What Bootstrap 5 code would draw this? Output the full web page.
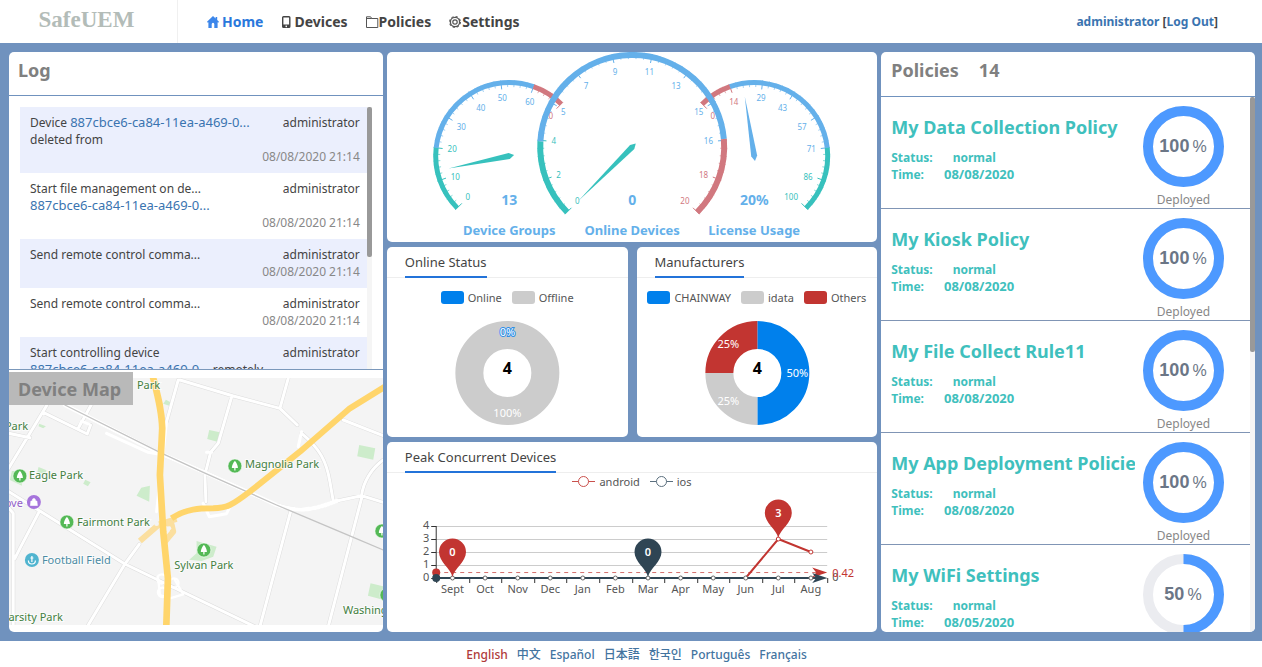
<!DOCTYPE html>
<html lang="en">
<head>
<meta charset="utf-8">
<meta name="viewport" content="width=device-width, initial-scale=1">
<title>SafeUEM</title>
<link href="https://cdn.jsdelivr.net/npm/bootstrap@5.3.0/dist/css/bootstrap.min.css" rel="stylesheet">
<style>
:root { --frame: #7092be; --teal: #37c1bd; --sky: #64b0ea; --rose: #d1787f; --ink: #444; --link: #3a74b0; }
body { font-family: "Noto Sans", "Noto Sans CJK SC", "Noto Sans CJK KR", sans-serif; font-size: 12px; line-height: 17px; color: var(--ink); }
a { text-decoration: none; color: var(--link); }
.topbar { min-height: 43px; }
.brand-box { width: 178px; min-height: 43px; border-right: 1px solid #f0f0f0; padding: 0 4px 4px 0; font: bold 23px "Liberation Serif", serif; color: #b3bcb8; }
.brand-box:hover { color: #b3bcb8; }
.topbar .nav { gap: 18px; padding-left: 29px; }
.topbar .nav-link { padding: 0; color: var(--ink); font-size: 14px; font-weight: 700; line-height: 20px; }
.topbar .nav-link.active { color: #2a78dc; gap: 3px; }
.account { padding-right: 44px; }
.board { background: var(--frame); padding: 9px 7px 9px 9px; display: grid; gap: 4px; grid-template-columns: minmax(0, 1fr); }
.panel { background: #fff; border-radius: 5px; overflow: hidden; }
.panel-head { height: 44px; border-bottom: 1px solid var(--frame); padding: 5px 9px; font-size: 18px; line-height: 27px; font-weight: 700; color: #808080; margin: 0; flex: none; }
.policy-head { height: 45px; padding: 5px 10px; }
.log-area { margin: 11px 11px 0; }
.scroll-area { overflow-y: auto; scrollbar-width: none; flex: 1 1 0; min-height: 260px; }
.scroll-area::-webkit-scrollbar { display: none; }
.track { position: absolute; top: 0; right: 0; bottom: 0; width: 5px; background: #f5f5f5; }
.track::before { content: ""; display: block; height: var(--thumb); background: #999; border-radius: 2px; }
#log { margin-right: 5px; }
.log-item { padding: 7px 7px 8px 10px; }
.log-item:nth-child(odd) { background: #ebeffd; }
.log-item a { font-size: 13px; }
.log-item time { color: #888; }
.log-text { max-width: 250px; }
.map-box { border-top: 1px solid #7b98bb; height: 263px; padding: 8px 0 7px; flex: none; }
.map-box svg { width: 100%; height: 100%; display: block; }
.map-title { position: absolute; left: 0; top: 2px; background: #b9b9b9; color: #808080; font-size: 18px; line-height: 28px; font-weight: 700; padding: 3px 12px 2px 9px; margin: 0; }
.chart-head { height: 31px; border-bottom: 1px solid #eee; padding: 0 18px; margin: 0; flex: none; }
.chart-head span { height: 31px; line-height: 31px; font-size: 13px; font-weight: 400; border-bottom: 2px solid #2373d9; }
.chart-svg { width: 100%; display: block; flex: none; }
.legend-row { font-size: 11px; line-height: 17px; gap: 10px; }
.legend-row li { display: flex; align-items: center; gap: 4px; color: #555; }
.pie-legend { height: 38px; }
.swatch { width: 23px; height: 13px; border-radius: 3px; }
.tick-label { font-size: 8px; }
.gauge-value { font-size: 14px; font-weight: 700; fill: var(--sky); text-anchor: middle; }
.gauge-title { font-size: 13px; font-weight: 700; fill: var(--sky); text-anchor: middle; }
.pie-label { font-size: 11px; fill: #fff; text-anchor: middle; }
.pie-label-empty { stroke: #2f8fe8; stroke-width: 2px; paint-order: stroke; }
.pie-total { font-size: 16px; font-weight: 700; fill: #000; text-anchor: middle; }
.axis-label { font-size: 11px; fill: #555; }
.policy-item { height: 112px; border-bottom: 1px solid #8095b5; padding: 0 31px 0 10px; }
.policy-name { font-size: 18px; line-height: 27px; font-weight: 700; margin: 17px 0 8px; white-space: nowrap; overflow: hidden; }
.policy-item dl { font-weight: 700; margin: 0; }
.policy-item dl, .policy-name { color: #3fc0bd; }
.policy-item dd { margin: 0; }
.policy-item dd time { font-size: 13px; }
.ring-box { width: 81px; flex: none; padding-top: 9px; color: #888; text-align: center; }
.ring-box svg { display: block; margin-bottom: 4px; }
.ring-box text { font: bold 18px "Liberation Sans", sans-serif; fill: #6b7686; text-anchor: middle; }
.ring-box .pct-sign { font-size: 16px; }
.lang-bar { min-height: 26px; gap: 9px; font-weight: 500; padding-left: 11px; }
.lang-bar a { color: #43749f; }
.lang-bar a.active { color: #b03a3a; }
.map-label { font-size: 11px; fill: #43803f; stroke: #fff; stroke-width: 2px; stroke-opacity: .7; paint-order: stroke; }
@media (min-width: 992px) {
  .board { grid-template-columns: 30% minmax(0, 1fr) 30%; }
}
</style>
</head>
<body class="min-vh-100 d-flex flex-column bg-white">

<header class="topbar d-flex flex-wrap align-items-center">
  <a class="brand-box d-flex align-items-center justify-content-center" href="#">SafeUEM</a>
  <ul class="nav flex-grow-1">
    <li class="nav-item"><a class="nav-link active d-flex align-items-center" href="#"><svg width="12" height="12" viewBox="0 0 12 12" fill="#3c86ea"><path d="M6 0 L8.6 2.4 V1 H10.2 V3.9 L12 5.8 L11.2 6.8 L10.6 6.3 V12 H7.3 V8.2 A1.3 1.5 0 0 0 4.7 8.2 V12 H1.4 V6.3 L.8 6.8 L0 5.8 Z"/></svg>Home</a></li>
    <li class="nav-item"><a class="nav-link d-flex align-items-center" href="#"><svg width="13" height="12" viewBox="0 0 13 12"><path fill="#444" fill-rule="evenodd" d="M2.5 0 H8 Q9.5 0 9.5 1.5 V10.5 Q9.5 12 8 12 H2.5 Q1 12 1 10.5 V1.5 Q1 0 2.5 0 Z M2.4 1.4 V8.6 H8.1 V1.4 Z M5.25 9.5 A.8 .8 0 1 0 5.26 9.5 Z"/></svg>Devices</a></li>
    <li class="nav-item"><a class="nav-link d-flex align-items-center" href="#"><svg width="13" height="12" viewBox="0 0 13 12"><path fill="none" stroke="#555" d="M.5 11.5 V.8 H4.6 L5.8 2.5 H11.8 V11.5 Z M5.8 2.5 H.5"/></svg>Policies</a></li>
    <li class="nav-item"><a class="nav-link d-flex align-items-center" href="#"><svg width="13" height="12" viewBox="0 0 13 12" fill="none" stroke="#555"><circle cx="6" cy="6" r="4.6" stroke-width="1.3"/><circle cx="6" cy="6" r="5.4" stroke-width="1.1" stroke-dasharray="2.2 2.04"/><circle cx="6" cy="6" r="2.2" stroke-width="1.2"/></svg>Settings</a></li>
  </ul>
  <div class="account fw-bold"><a href="#">administrator</a> [<a href="#">Log Out</a>]</div>
</header>

<main class="board flex-fill">
  <section class="panel d-flex flex-column">
    <h2 class="panel-head">Log</h2>
    <div class="log-area d-flex flex-column flex-fill position-relative">
      <div class="scroll-area">
        <div id="log"></div>
      </div>
      <div class="track" style="--thumb:150px"></div>
    </div>
    <div class="map-box position-relative">
      <svg viewBox="0 0 374 247" preserveAspectRatio="xMidYMid slice" role="img" aria-label="Map of device positions">
        <rect width="374" height="247" fill="#f4f4f4"/>
        <g transform="translate(-9 -13) scale(.33333)" fill="none" stroke-linecap="round" stroke-linejoin="round">
          <g fill="#cdeccb">
            <path d="M628 195 L660 202 652 230 622 222Z M1078 240 L1126 250 1120 284 1072 274Z M424 368 L450 362 448 410 410 392Z M590 528 L650 545 640 575 605 588 568 584 590 565Z M1112 655 L1152 664 V705 L1104 692Z M498 104 L512 112 508 122 490 116Z M118 176 L138 184 130 190 116 184Z M256 344 L272 352 264 364 250 356Z M116 306 L140 316 136 328 112 322Z M36 318 L66 318 66 362 30 345Z"/>
          </g>
          <g stroke="#ddd" stroke-width="12">
            <path d="M140 122 L20 320 M130 142 L262 207 272 180 M235 190 L275 118 M27 205 L90 218 M27 380 L375 597 765 785 M418 538 L375 597 262 785 M118 440 L60 550 45 580 M27 430 L40 445 V785 M535 45 L500 170 M540 45 L700 93 840 130 892 180 M865 40 L840 130 M696 93 L655 235 632 262 615 330 618 410 M872 440 L780 785 M1085 400 L985 785 M905 205 C960 250 980 290 990 350 L1000 408 M1000 410 L1085 392 1150 412 M1085 392 C1090 350 1115 310 1150 285 M1030 165 L1150 212"/>
            <path d="M195 120 L480 265 610 320 830 420 C890 440 930 440 1010 408"/>
          </g>
          <g stroke="#fff" stroke-width="9">
            <path d="M140 122 L20 320 M130 142 L262 207 272 180 245 168 235 190 M235 190 L275 118 M27 205 L90 218 M27 380 L375 597 765 785 M418 538 L375 597 262 785 M118 440 L60 550 45 580 M27 430 L40 445 V785 M535 45 L500 170 470 440 M540 45 L700 93 840 130 892 180 M865 40 L840 130 M696 93 L655 235 632 262 615 330 618 410 M620 262 L635 262 M872 440 L780 785 M1085 400 L985 785 M905 205 C960 250 980 290 990 350 L1000 408 M1000 410 L1085 392 1150 412 M1085 392 C1090 350 1115 310 1150 285 M1030 165 L1150 212 M905 200 L895 245"/>
            <path d="M195 120 L480 265 610 320 830 420 C890 440 930 440 1010 408" stroke-width="13"/>
            <path d="M320 205 L445 262 480 268 M610 415 L628 455 680 446 690 425"/>
          </g>
          <path d="M195 120 L480 262 610 322 830 420 1055 515 1150 555" stroke="#c4c4c4" stroke-width="4"/>
          <g stroke="#fff" stroke-width="7"><circle cx="486" cy="642" r="14"/><circle cx="522" cy="654" r="14"/><circle cx="488" cy="682" r="14"/><path d="M475 640 L480 690 510 700 550 688 525 645"/></g>
          <path d="M420 528 L478 478 530 462 M480 470 L515 478 520 500 495 530" stroke="#fbdf9f" stroke-width="18" stroke-linecap="butt"/>
          <g fill="#f4f4f4"><circle cx="470" cy="476" r="7"/><circle cx="508" cy="490" r="6"/></g>
          <g stroke="#ffd56b" stroke-linecap="butt">
            <path d="M455 20 C470 80 486 130 487 190 L480 330 490 500 504 640 499 790" stroke-width="20"/>
            <path d="M515 460 C560 430 600 430 640 430 C690 428 700 415 750 380 L900 260 1050 130 1160 62" stroke-width="18"/>
          </g>
        </g>
        <g class="map-label">
          <text x="128" y="11">Park</text><text x="-4" y="52">Park</text><text x="20" y="101">Eagle Park</text>
          <text x="14" y="129" text-anchor="end" fill="#9361c9">Grove</text><text x="68" y="148">Fairmont Park</text>
          <text x="33" y="186" fill="#4b8ba3">Football Field</text><text x="195" y="191" text-anchor="middle">Sylvan Park</text>
          <text x="236" y="90">Magnolia Park</text><text x="54" y="243" text-anchor="end">Varsity Park</text><text x="334" y="236">Washington</text>
        </g>
        <g id="parks"></g>
        <circle cx="25" cy="124" r="7" fill="#a674dc"/><path d="M22 123 H28 L28.500 127.500 H21.500 Z M23.500 123 V122 A1.500 1.500 0 0 1 26.500 122 V123" fill="#fff" stroke="#fff" stroke-width=".6"/>
        <circle cx="23" cy="182" r="7" fill="#50b4cf"/><path d="M19.500 182.500 A3.500 3.500 0 0 0 26.500 182.500 M23 178 V184 M21.500 180 H24.500" fill="none" stroke="#fff" stroke-width="1.200"/>
      </svg>
      <h2 class="map-title">Device Map</h2>
    </div>
  </section>

  <div class="d-flex flex-column" style="gap:5px">
    <section class="panel flex-fill d-flex align-items-center">
      <svg id="gauges" class="chart-svg" height="190" viewBox="0 0 490 190"></svg>
    </section>
    <div class="row g-0 flex-fill" style="column-gap:9px">
      <section class="panel col d-flex flex-column">
        <h3 class="chart-head d-flex"><span>Online Status</span></h3>
        <ul class="legend-row pie-legend list-unstyled d-flex justify-content-center align-items-center mb-0">
          <li><i class="swatch" style="background:#0080ec"></i>Online</li>
          <li><i class="swatch" style="background:#ccc"></i>Offline</li>
        </ul>
        <svg class="chart-svg" height="121" viewBox="0 0 240 121">
          <circle cx="120" cy="57" r="38" fill="none" stroke="#ccc" stroke-width="28"/>
          <text class="pie-label pie-label-empty" x="120" y="20">0%</text>
          <text class="pie-label" x="120" y="101">100%</text>
          <text class="pie-total" x="120" y="58">4</text>
        </svg>
      </section>
      <section class="panel col d-flex flex-column">
        <h3 class="chart-head d-flex"><span>Manufacturers</span></h3>
        <ul class="legend-row pie-legend list-unstyled d-flex justify-content-center align-items-center mb-0">
          <li><i class="swatch" style="background:#0080ec"></i>CHAINWAY</li>
          <li><i class="swatch" style="background:#ccc"></i>idata</li>
          <li><i class="swatch" style="background:#c23531"></i>Others</li>
        </ul>
        <svg class="chart-svg" height="121" viewBox="0 0 240 121">
          <g fill="none" stroke-width="28">
            <path d="M120 19 A38 38 0 0 1 120 95" stroke="#0080ec"/>
            <path d="M120 95 A38 38 0 0 1 82 57" stroke="#ccc"/>
            <path d="M82 57 A38 38 0 0 1 120 19" stroke="#c23531"/>
          </g>
          <text class="pie-label" x="160" y="61">50%</text>
          <text class="pie-label" x="91" y="32">25%</text>
          <text class="pie-label" x="91" y="89">25%</text>
          <text class="pie-total" x="120" y="58">4</text>
        </svg>
      </section>
    </div>
    <section class="panel flex-fill d-flex flex-column">
      <h3 class="chart-head d-flex"><span>Peak Concurrent Devices</span></h3>
      <ul class="legend-row list-unstyled d-flex justify-content-center mb-0">
        <li><svg width="23" height="13" fill="#fff" stroke="#c9504c"><path d="M0 6.500 H23"/><circle cx="11.500" cy="6.500" r="5"/></svg>android</li>
        <li><svg width="23" height="13" fill="#fff" stroke="#5b6f7e"><path d="M0 6.500 H23"/><circle cx="11.500" cy="6.500" r="5"/></svg>ios</li>
      </ul>
      <svg id="peak" class="chart-svg" height="142" viewBox="0 0 490 142"></svg>
    </section>
  </div>

  <section class="panel d-flex flex-column">
    <h2 class="panel-head policy-head">Policies<span class="ms-3 ps-1">14</span></h2>
    <div class="d-flex flex-column flex-fill position-relative">
      <div class="scroll-area" id="policies"></div>
      <div class="track" style="--thumb:255px"></div>
    </div>
  </section>
</main>

<footer class="lang-bar d-flex flex-wrap align-items-center justify-content-center">
  <a class="active" href="#">English</a><a href="#" lang="zh">中文</a><a href="#">Español</a><a href="#" lang="ja">日本語</a><a href="#" lang="ko">한국인</a><a href="#">Português</a><a href="#">Français</a>
</footer>

<script src="https://cdn.jsdelivr.net/npm/bootstrap@5.3.0/dist/js/bootstrap.bundle.min.js"></script>
<script>
const TEAL = '#37c1bd', SKY = '#64b0ea', ROSE = '#d1787f', RED = '#c23531', NAVY = '#2f4554';
const byId = id => document.getElementById(id);

// Log entries
const device = '<a href="#">887cbce6-ca84-11ea-a469-0...</a>';
byId('log').innerHTML = [
  'Device ' + device + '<br>deleted from',
  'Start file management on de...<br>' + device,
  'Send remote control comma...',
  'Send remote control comma...',
  'Start controlling device<br>' + device + ' remotely'
].map(text => `<article class="log-item"><div class="d-flex justify-content-between"><div class="log-text">${text}</div><div>administrator</div></div><time class="d-block text-end">08/08/2020 21:14</time></article>`).join('');

// Policies
byId('policies').innerHTML = [
  ['My Data Collection Policy', '08/08/2020', 100],
  ['My Kiosk Policy', '08/08/2020', 100],
  ['My File Collect Rule11', '08/08/2020', 100],
  ['My App Deployment Policies', '08/08/2020', 100],
  ['My WiFi Settings', '08/05/2020', 50]
].map(([name, date, pct]) => `<article class="policy-item d-flex justify-content-between gap-2">
  <div class="flex-fill overflow-hidden"><h3 class="policy-name">${name}</h3>
  <dl><div class="d-flex"><dt class="me-3 pe-1">Status:</dt><dd>normal</dd></div><div class="d-flex"><dt class="me-3 pe-1">Time:</dt><dd><time>${date}</time></dd></div></dl></div>
  <div class="ring-box"><svg width="81" height="81" viewBox="0 0 81 81"><circle cx="40.5" cy="40.5" r="35.5" fill="none" stroke="#ebecf0" stroke-width="10"/><circle cx="40.5" cy="40.5" r="35.5" fill="none" stroke="#4d99ff" stroke-width="10" pathLength="100" stroke-dasharray="${pct} ${100 - pct}" transform="rotate(-90 40.5 40.5)"/><text x="40" y="46">${pct}<tspan class="pct-sign fw-normal" dx="3">%</tspan></text></svg>Deployed</div>
</article>`).join('');

// Park markers on the map
byId('parks').innerHTML = [[11, 98], [58, 144], [195, 172], [226, 88], [373, 153], [378, 217]].map(([x, y]) =>
  `<g transform="translate(${x} ${y})"><circle r="7" fill="#54b956" stroke="#fff" stroke-opacity=".6"/><path d="M0 -5 C1.5 -4 3.2 0 3 2 H.6 V4.4 H-.6 V2 H-3 C-3.2 0 -1.500 -4 0 -5Z" fill="#fff"/></g>`).join('');

// Gauges
function gauge({ cx, cy, r, ring, from, to, labels, stops, frac, pointer, needle, value, title }) {
  const at = (deg, rad) => [cx + rad * Math.cos(deg * Math.PI / 180), cy - rad * Math.sin(deg * Math.PI / 180)];
  const p = xy => xy.map(n => n.toFixed(2)).join(' ');
  const ang = t => from + (to - from) * t;
  const colorAt = t => stops.find(s => t <= s[0] + .005)[1];
  const n = labels.length - 1;
  let out = '', start = 0;
  for (let i = 0; i <= n * 5; i++) {
    const t = i / (n * 5), a = ang(t), major = i % 5 === 0, c = colorAt(t);
    out += `<path d="M${p(at(a, r))} L${p(at(a, r - (major ? 9 : 7)))}" stroke="${c}" stroke-width="1" stroke-opacity="${major ? 1 : .6}"/>`;
    if (major) {
      const [x, y] = at(a, r - 14), cs = Math.cos(a * Math.PI / 180), sn = Math.sin(a * Math.PI / 180);
      const anchor = cs < -.4 ? 'start' : cs > .4 ? 'end' : 'middle';
      const dy = sn > .4 ? 7 : sn < -.4 ? 0 : 3;
      out += `<text class="tick-label" x="${x.toFixed(1)}" y="${(y + dy).toFixed(1)}" text-anchor="${anchor}" fill="${c}">${labels[i / 5]}</text>`;
    }
  }
  for (const [end, color] of stops) {
    const rad = r - ring / 2;
    out += `<path d="M${p(at(ang(start), rad))} A${rad} ${rad} 0 0 1 ${p(at(ang(end), rad))}" fill="none" stroke="${color}" stroke-width="${ring}"/>`;
    start = end;
  }
  const a = ang(frac);
  out += `<path d="M${p(at(a + 180, 5))} L${p(at(a + 90, needle))} L${p(at(a, pointer))} L${p(at(a - 90, needle))}Z" fill="${colorAt(frac)}"/>`;
  return out + `<text class="gauge-value" x="${cx}" y="153">${value}</text><text class="gauge-title" x="${cx}" y="183">${title}</text>`;
}
byId('gauges').innerHTML =
  gauge({ cx: 122, cy: 104, r: 76, ring: 5, from: 225, to: 45, labels: [0, 10, 20, 30, 40, 50, 60, 70], stops: [[2 / 7, TEAL], [6 / 7, SKY], [1, ROSE]], frac: 13 / 70, pointer: 62, needle: 3, value: '13', title: 'Device Groups' }) +
  gauge({ cx: 367, cy: 104, r: 76, ring: 5, from: 135, to: -45, labels: [0, 14, 29, 43, 57, 71, 86, 100], stops: [[1 / 7, ROSE], [5 / 7, SKY], [1, TEAL]], frac: .2, pointer: 60, needle: 3, value: '20%', title: 'License Usage' }) +
  gauge({ cx: 245, cy: 95, r: 95, ring: 6, from: 225, to: -45, labels: [0, 2, 4, 5, 7, 9, 11, 13, 15, 16, 18, 20], stops: [[.18, TEAL], [.815, SKY], [1, ROSE]], frac: 0, pointer: 76, needle: 3, value: '0', title: 'Online Devices' });

// Peak concurrent devices
(function () {
  const months = ['Sept', 'Oct', 'Nov', 'Dec', 'Jan', 'Feb', 'Mar', 'Apr', 'May', 'Jun', 'Jul', 'Aug'];
  const android = [0, 0, 0, 0, 0, 0, 0, 0, 0, 0, 3, 2];
  const x0 = 49, x1 = 440, base = 88, unit = 13, step = (x1 - x0) / 12;
  const X = i => +(x0 + step * (i + .5)).toFixed(1), Y = v => base - unit * v;
  const arrow = (y, c) => `<path d="M${x1} ${y} L${x1 - 15} ${y - 5} L${x1 - 11} ${y} L${x1 - 15} ${y + 5}Z" fill="${c}"/>`;
  const pin = (i, v, c) => `<g transform="translate(${X(i)} ${Y(v) - 26})"><path d="M0 25 C-2 16 -13.500 10 -13.500 0 A13.500 13.500 0 0 1 13.500 0 C13.500 10 2 16 0 25Z" fill="${c}"/><text y="4" fill="#fff" font-size="11" font-weight="600" text-anchor="middle">${v}</text></g>`;
  let s = '';
  for (let v = 0; v <= 4; v++) {
    s += `<path d="M${x0} ${Y(v) + .5} H${x1}" stroke="#ccc"/><path d="M${x0 - 5} ${Y(v) + .5} H${x0}" stroke="#333"/><text class="axis-label" x="${x0 - 7}" y="${Y(v) + 3}" text-anchor="end">${v}</text>`;
  }
  s += `<path d="M${x0} ${Y(4)} V${base}" stroke="#333" stroke-width="1"/>`;
  for (let i = 0; i <= 12; i++) s += `<path d="M${Math.round(x0 + step * i) + .5} ${base} v5" stroke="#333"/>`;
  months.forEach((m, i) => s += `<text class="axis-label" x="${X(i)}" y="103" text-anchor="middle">${m}</text>`);
  s += `<path d="M${x0} ${Y(.42)} H${x1 - 10}" stroke="${RED}" stroke-opacity=".7" stroke-dasharray="4 4"/>`;
  s += `<polyline points="${android.map((v, i) => X(i) + ',' + Y(v)).join(' ')}" fill="none" stroke="${RED}" stroke-width="2"/>`;
  s += `<path d="M${X(0)} ${base} H${X(11)} M${x0} ${base} H${x1 - 10}" stroke="${NAVY}" stroke-width="2"/>`;
  s += `<circle cx="${x0}" cy="${Y(.42)}" r="4" fill="${RED}"/><circle cx="${x0}" cy="${base}" r="4" fill="${NAVY}"/>` + arrow(Y(.42), RED) + arrow(base, NAVY);
  s += `<text class="axis-label" x="445" y="${base + 3}">0</text><text x="445" y="${Y(.42) + 4}" font-size="11" fill="${RED}">0.42</text>`;
  android.forEach((v, i) => {
    s += `<circle cx="${X(i)}" cy="${base}" r="2" fill="#fff" stroke="#666"/>`;
    if (v) s += `<circle cx="${X(i)}" cy="${Y(v)}" r="2" fill="#fff" stroke="${RED}"/>`;
  });
  byId('peak').innerHTML = s + pin(0, 0, RED) + pin(6, 0, NAVY) + pin(10, 3, RED);
})();
</script>
</body>
</html>
